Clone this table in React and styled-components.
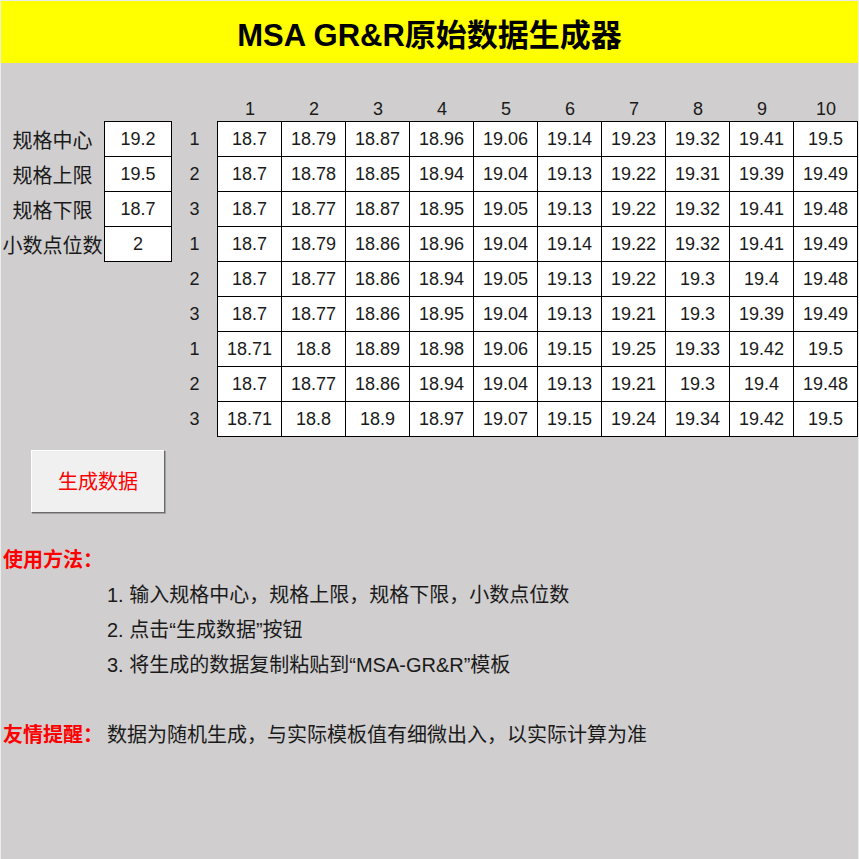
import React from "react";
import styled, { createGlobalStyle } from "styled-components";

const GlobalStyle = createGlobalStyle`
  html, body { margin: 0; padding: 0; background: #d0cecf; }
  * { box-sizing: border-box; }
`;

const Page = styled.div`
  width: 859px;
  height: 859px;
  background: #d0cecf;
  border: 1px solid #ececec;
  border-bottom: none;
  overflow: hidden;
  font-family: "Liberation Sans", "Noto Sans CJK SC", sans-serif;
  color: #111;
`;

const Header = styled.header`
  height: 62px;
  background: #ffff00;
  display: flex;
  align-items: center;
  justify-content: center;
`;

const Title = styled.h1`
  margin: 0;
  padding-top: 1px;
  font-family: "Liberation Sans", "Noto Sans CJK SC", sans-serif;
  font-weight: 700;
  font-size: 31px;
  color: #000;
`;

const Sheet = styled.div`
  display: flex;
  padding-top: 23px;
`;

const LeftPanel = styled.div`
  display: flex;
  margin-top: 35px;
  width: 171px;
  align-self: flex-start;
`;

const LabelCol = styled.div`
  width: 103px;
  display: flex;
  flex-direction: column;
  padding-top: 1px;
`;

const Label = styled.div`
  height: 35px;
  display: flex;
  align-items: center;
  justify-content: center;
  font-family: "Noto Sans CJK SC", sans-serif;
  font-size: 20px;
  color: #1a1a1a;
  white-space: nowrap;
`;

const InputBox = styled.div`
  width: 68px;
  display: grid;
  grid-template-rows: repeat(4, 34px);
  gap: 1px;
  background: #000;
  border: 1px solid #000;
`;

const InputCell = styled.div`
  background: #fff;
  display: flex;
  align-items: center;
  justify-content: center;
  font-size: 18px;
  color: #1a1a1a;
`;

const IndexCol = styled.div`
  width: 45px;
  margin-top: 35px;
  padding-top: 1px;
  display: flex;
  flex-direction: column;
`;

const IndexCell = styled.div`
  height: 35px;
  display: flex;
  align-items: center;
  justify-content: center;
  font-size: 18px;
  color: #1a1a1a;
`;

const TableWrap = styled.div`
  width: 641px;
  display: flex;
  flex-direction: column;
`;

const HeadRow = styled.div`
  display: grid;
  grid-template-columns: repeat(10, 64px);
  padding-left: 1px;
  height: 35px;
`;

const HeadCell = styled.div`
  display: flex;
  align-items: flex-end;
  justify-content: center;
  line-height: 22px;
  padding-bottom: 1px;
  font-size: 18px;
  color: #1a1a1a;
`;

const Grid = styled.div`
  display: grid;
  grid-template-columns: repeat(10, 63px);
  grid-auto-rows: 34px;
  gap: 1px;
  background: #000;
  border: 1px solid #000;
`;

const Cell = styled.div`
  background: #fff;
  display: flex;
  align-items: center;
  justify-content: center;
  font-size: 18px;
  color: #1a1a1a;
`;

const ButtonArea = styled.div`
  height: 104px;
  padding: 13px 0 0 30px;
`;

const GenButton = styled.button`
  width: 134px;
  height: 63px;
  background: #f0f0f0;
  border: 1px solid;
  border-color: #ffffff #6b6b6b #6b6b6b #ffffff;
  box-shadow: 1px 1px 0 #a0a0a0;
  font-family: "Noto Sans CJK SC", sans-serif;
  font-size: 20px;
  color: #ff0000;
  cursor: pointer;
  padding: 0 0 3px 0;
`;

const Line = styled.div`
  height: 35px;
  display: flex;
  align-items: center;
  font-family: "Liberation Sans", "Noto Sans CJK SC", sans-serif;
  font-size: 20px;
  color: #1a1a1a;
  padding-left: ${(p) => (p.$indent ? "106px" : "2px")};
  white-space: nowrap;
`;

const RedTitle = styled.span`
  font-family: "Noto Sans CJK SC", sans-serif;
  color: #ff0000;
  font-weight: 700;
  width: ${(p) => p.$w || "auto"};
`;

const CjkText = styled.span`
  font-family: "Noto Sans CJK SC", sans-serif;
`;

const labels = ["规格中心", "规格上限", "规格下限", "小数点位数"];
const inputs = ["19.2", "19.5", "18.7", "2"];
const rowIdx = [1, 2, 3, 1, 2, 3, 1, 2, 3];
const data = [
  ["18.7", "18.79", "18.87", "18.96", "19.06", "19.14", "19.23", "19.32", "19.41", "19.5"],
  ["18.7", "18.78", "18.85", "18.94", "19.04", "19.13", "19.22", "19.31", "19.39", "19.49"],
  ["18.7", "18.77", "18.87", "18.95", "19.05", "19.13", "19.22", "19.32", "19.41", "19.48"],
  ["18.7", "18.79", "18.86", "18.96", "19.04", "19.14", "19.22", "19.32", "19.41", "19.49"],
  ["18.7", "18.77", "18.86", "18.94", "19.05", "19.13", "19.22", "19.3", "19.4", "19.48"],
  ["18.7", "18.77", "18.86", "18.95", "19.04", "19.13", "19.21", "19.3", "19.39", "19.49"],
  ["18.71", "18.8", "18.89", "18.98", "19.06", "19.15", "19.25", "19.33", "19.42", "19.5"],
  ["18.7", "18.77", "18.86", "18.94", "19.04", "19.13", "19.21", "19.3", "19.4", "19.48"],
  ["18.71", "18.8", "18.9", "18.97", "19.07", "19.15", "19.24", "19.34", "19.42", "19.5"],
];

export default function App() {
  return (
    <Page>
      <GlobalStyle />
      <Header>
        <Title>MSA GR&amp;R原始数据生成器</Title>
      </Header>
      <Sheet>
        <LeftPanel>
          <LabelCol>
            {labels.map((l) => (
              <Label key={l}>{l}</Label>
            ))}
          </LabelCol>
          <InputBox>
            {inputs.map((v, i) => (
              <InputCell key={i}>{v}</InputCell>
            ))}
          </InputBox>
        </LeftPanel>
        <IndexCol>
          {rowIdx.map((n, i) => (
            <IndexCell key={i}>{n}</IndexCell>
          ))}
        </IndexCol>
        <TableWrap>
          <HeadRow>
            {Array.from({ length: 10 }, (_, i) => (
              <HeadCell key={i}>{i + 1}</HeadCell>
            ))}
          </HeadRow>
          <Grid>
            {data.flat().map((v, i) => (
              <Cell key={i}>{v}</Cell>
            ))}
          </Grid>
        </TableWrap>
      </Sheet>
      <ButtonArea>
        <GenButton type="button">生成数据</GenButton>
      </ButtonArea>
      <Line>
        <RedTitle>使用方法：</RedTitle>
      </Line>
      <Line $indent>1. 输入规格中心，规格上限，规格下限，小数点位数</Line>
      <Line $indent>2. 点击“生成数据”按钮</Line>
      <Line $indent>3. 将生成的数据复制粘贴到“MSA-GR&amp;R”模板</Line>
      <Line />
      <Line>
        <RedTitle $w="104px">友情提醒：</RedTitle>
        <CjkText>数据为随机生成，与实际模板值有细微出入，以实际计算为准</CjkText>
      </Line>
    </Page>
  );
}
